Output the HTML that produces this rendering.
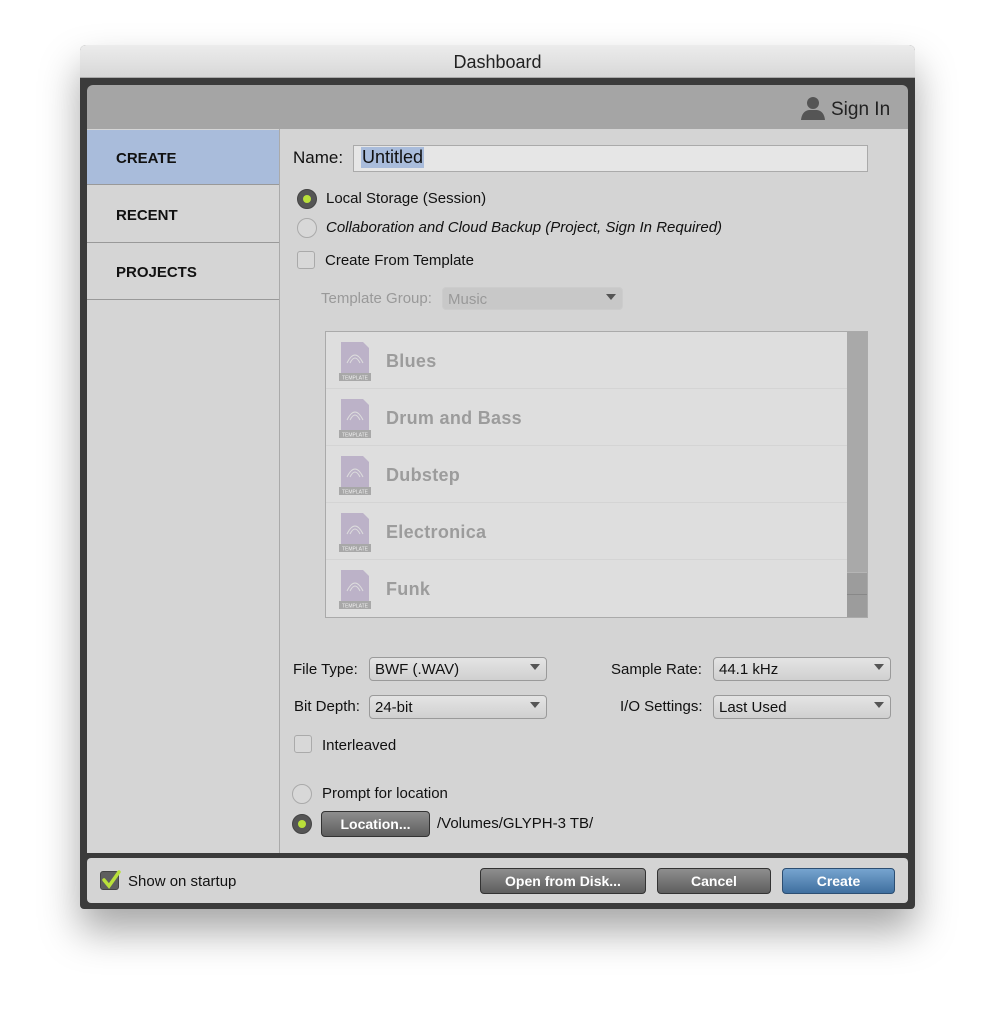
<!DOCTYPE html>
<html><head><meta charset="utf-8"><style>
*{box-sizing:border-box;margin:0;padding:0}
body{width:995px;height:1024px;background:#fff;position:relative;font-family:"Liberation Sans",sans-serif;overflow:hidden}
.a{position:absolute}
.t{font-size:15px;color:#111;white-space:nowrap}
.sel{background:linear-gradient(#e4e4e4,#d0d0d0);border:1px solid #9a9a9a;border-radius:4px;font-size:15px;color:#111;padding:3px 0 0 5px}
.sel:after{content:"";position:absolute;right:6px;top:6px;border:5px solid transparent;border-top:6px solid #555;border-bottom:0}
.rad{width:20px;height:20px;border-radius:50%;border:1px solid #aaa;background:#d8d8d8}
.radon{width:20px;height:20px;border-radius:50%;background:#555;border:1px solid #444}
.radon:after{content:"";position:absolute;left:5px;top:5px;width:8px;height:8px;border-radius:50%;background:#b9e03a}
.chk{width:18px;height:18px;border-radius:3px;border:1px solid #aaa;background:#d8d8d8}
.btn{border-radius:4px;border:1px solid #333;background:linear-gradient(#8e8e8e,#5e5e5e);color:#fff;font-weight:bold;font-size:14px;text-align:center;padding-top:4px}
.row{position:absolute;left:0;width:521px;height:57px;border-bottom:1px solid #d4d4d4}
.ic{position:absolute;left:13px;top:9px;width:32px;height:40px}
.rl{position:absolute;left:60px;top:19px;font-size:18px;font-weight:bold;color:#9c9c9c;letter-spacing:.3px}
</style></head><body>
<div class="a" style="left:80px;top:45px;width:835px;height:864px;background:#3b3b3b;border-radius:6px 6px 4px 4px;box-shadow:0 22px 40px rgba(0,0,0,.35)"></div>
<div class="a" style="left:80px;top:45px;width:835px;height:33px;background:linear-gradient(#ececec,#d8d8d8);border-radius:6px 6px 0 0;border-bottom:1px solid #aaa"></div>
<div class="a t" style="left:0;width:995px;top:52px;text-align:center;font-size:18px;color:#222">Dashboard</div>
<div class="a" style="left:87px;top:85px;width:821px;height:44px;background:#a5a5a5;border-radius:6px 6px 0 0"></div>
<svg class="a" style="left:800px;top:95px" width="26" height="26" viewBox="0 0 26 26"><circle cx="13" cy="8" r="6" fill="#555"/><path d="M1 25 Q2 16 9 15 L17 15 Q24 16 25 25Z" fill="#555"/></svg>
<div class="a t" style="left:831px;top:99px;font-size:19px;color:#222">Sign In</div>
<div class="a" style="left:87px;top:129px;width:193px;height:724px;background:#d5d5d5;border-right:1px solid #aaa"></div>
<div class="a" style="left:87px;top:130px;width:192px;height:55px;background:#a9bcdb;border-bottom:1px solid #999"></div>
<div class="a" style="left:87px;top:241px;width:192px;height:2px;border-bottom:1px solid #999"></div>
<div class="a" style="left:87px;top:298px;width:192px;height:2px;border-bottom:1px solid #999"></div>
<div class="a t" style="left:116px;top:150px;font-weight:bold;font-size:15px">CREATE</div>
<div class="a t" style="left:116px;top:207px;font-weight:bold;font-size:15px">RECENT</div>
<div class="a t" style="left:116px;top:264px;font-weight:bold;font-size:15px">PROJECTS</div>
<div class="a" style="left:280px;top:129px;width:628px;height:724px;background:#d4d4d4"></div>
<div class="a t" style="left:293px;top:148px;font-size:17px">Name:</div>
<div class="a" style="left:353px;top:145px;width:515px;height:27px;background:#e6e6e6;border:1px solid #aaa"></div>
<div class="a t" style="left:361px;top:147px;font-size:18px;background:#a9bcdb;padding:0 1px">Untitled</div>
<div class="a radon" style="left:297px;top:189px"></div>
<div class="a t" style="left:326px;top:190px">Local Storage (Session)</div>
<div class="a rad" style="left:297px;top:218px"></div>
<div class="a t" style="left:326px;top:219px;font-style:italic">Collaboration and Cloud Backup (Project, Sign In Required)</div>
<div class="a chk" style="left:297px;top:251px"></div>
<div class="a t" style="left:325px;top:252px">Create From Template</div>
<div class="a t" style="left:321px;top:290px;color:#999">Template Group:</div>
<div class="a sel" style="left:442px;top:287px;width:181px;height:23px;color:#999;border-color:#ccc;background:#c8c8c8">Music</div>
<div class="a" style="left:325px;top:331px;width:543px;height:287px;background:#dedede;border:1px solid #aaa;overflow:hidden">
<div class="row" style="top:0"><svg class="ic" viewBox="0 0 32 40"><path d="M2 1 H24 L30 7 V32 H2Z" fill="#bcb2c8"/><path d="M8 22 Q16 6 24 22" stroke="#ddd" fill="none"/><path d="M11 22 Q16 12 21 22" stroke="#ddd" fill="none"/><rect x="0" y="32" width="32" height="8" fill="#a8a8a8"/><text x="16" y="38.5" font-size="5" fill="#eee" text-anchor="middle" font-family="Liberation Sans">TEMPLATE</text></svg><div class="rl">Blues</div></div>
<div class="row" style="top:57px"><svg class="ic" viewBox="0 0 32 40"><path d="M2 1 H24 L30 7 V32 H2Z" fill="#bcb2c8"/><path d="M8 22 Q16 6 24 22" stroke="#ddd" fill="none"/><path d="M11 22 Q16 12 21 22" stroke="#ddd" fill="none"/><rect x="0" y="32" width="32" height="8" fill="#a8a8a8"/><text x="16" y="38.5" font-size="5" fill="#eee" text-anchor="middle" font-family="Liberation Sans">TEMPLATE</text></svg><div class="rl">Drum and Bass</div></div>
<div class="row" style="top:114px"><svg class="ic" viewBox="0 0 32 40"><path d="M2 1 H24 L30 7 V32 H2Z" fill="#bcb2c8"/><path d="M8 22 Q16 6 24 22" stroke="#ddd" fill="none"/><path d="M11 22 Q16 12 21 22" stroke="#ddd" fill="none"/><rect x="0" y="32" width="32" height="8" fill="#a8a8a8"/><text x="16" y="38.5" font-size="5" fill="#eee" text-anchor="middle" font-family="Liberation Sans">TEMPLATE</text></svg><div class="rl">Dubstep</div></div>
<div class="row" style="top:171px"><svg class="ic" viewBox="0 0 32 40"><path d="M2 1 H24 L30 7 V32 H2Z" fill="#bcb2c8"/><path d="M8 22 Q16 6 24 22" stroke="#ddd" fill="none"/><path d="M11 22 Q16 12 21 22" stroke="#ddd" fill="none"/><rect x="0" y="32" width="32" height="8" fill="#a8a8a8"/><text x="16" y="38.5" font-size="5" fill="#eee" text-anchor="middle" font-family="Liberation Sans">TEMPLATE</text></svg><div class="rl">Electronica</div></div>
<div class="row" style="top:228px;border:0"><svg class="ic" viewBox="0 0 32 40"><path d="M2 1 H24 L30 7 V32 H2Z" fill="#bcb2c8"/><path d="M8 22 Q16 6 24 22" stroke="#ddd" fill="none"/><path d="M11 22 Q16 12 21 22" stroke="#ddd" fill="none"/><rect x="0" y="32" width="32" height="8" fill="#a8a8a8"/><text x="16" y="38.5" font-size="5" fill="#eee" text-anchor="middle" font-family="Liberation Sans">TEMPLATE</text></svg><div class="rl">Funk</div></div>
<div class="a" style="left:521px;top:0;width:21px;height:287px;background:#a9a9a9"></div>
<div class="a" style="left:521px;top:240px;width:21px;height:47px;background:#9c9c9c;border-top:1px solid #b5b5b5"></div>
<div class="a" style="left:521px;top:262px;width:21px;height:1px;background:#888"></div>
</div>
<div class="a t" style="left:293px;top:661px">File Type:</div>
<div class="a sel" style="left:369px;top:657px;width:178px;height:24px">BWF (.WAV)</div>
<div class="a t" style="left:611px;top:661px">Sample Rate:</div>
<div class="a sel" style="left:713px;top:657px;width:178px;height:24px">44.1 kHz</div>
<div class="a t" style="left:294px;top:698px">Bit Depth:</div>
<div class="a sel" style="left:369px;top:695px;width:178px;height:24px">24-bit</div>
<div class="a t" style="left:620px;top:698px">I/O Settings:</div>
<div class="a sel" style="left:713px;top:695px;width:178px;height:24px">Last Used</div>
<div class="a chk" style="left:294px;top:735px"></div>
<div class="a t" style="left:322px;top:737px">Interleaved</div>
<div class="a rad" style="left:292px;top:784px"></div>
<div class="a t" style="left:322px;top:785px">Prompt for location</div>
<div class="a radon" style="left:292px;top:814px"></div>
<div class="a btn" style="left:321px;top:811px;width:109px;height:26px">Location...</div>
<div class="a t" style="left:437px;top:815px">/Volumes/GLYPH-3 TB/</div>
<div class="a" style="left:87px;top:858px;width:821px;height:45px;background:#d4d4d4;border-radius:4px"></div>
<div class="a" style="left:100px;top:871px;width:19px;height:19px;background:#5e5e5e;border-radius:3px;border:1px solid #444"></div>
<svg class="a" style="left:100px;top:868px" width="22" height="22" viewBox="0 0 22 22"><path d="M4 12 L9 18 L19 4" stroke="#b9e03a" stroke-width="3.5" fill="none" stroke-linecap="round"/></svg>
<div class="a t" style="left:128px;top:873px">Show on startup</div>
<div class="a btn" style="left:480px;top:868px;width:166px;height:26px">Open from Disk...</div>
<div class="a btn" style="left:657px;top:868px;width:114px;height:26px">Cancel</div>
<div class="a btn" style="left:782px;top:868px;width:113px;height:26px;background:linear-gradient(#76a4cf,#3f6f9f);border-color:#2c4e72">Create</div>
</body></html>
